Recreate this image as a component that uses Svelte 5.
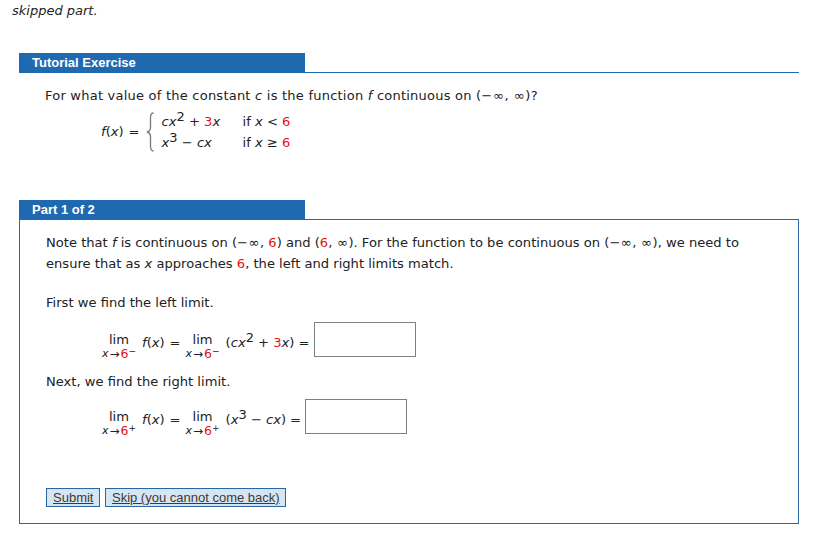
<script>
  const steps = [
    { side: '−', label: 'First we find the left limit.', name: 'left limit' },
    { side: '+', label: 'Next, we find the right limit.', name: 'right limit' }
  ];
</script>

{#snippet lim(side)}
  <span class="lim">
    <span>lim</span>
    <span class="under"><i>x</i><span class="arrow">→</span><span class="red num">6</span><span class="side">{side}</span></span>
  </span>
{/snippet}

<div class="page">
  <p class="skipped">skipped part.</p>

  <section class="exercise">
    <div class="head"><h2>Tutorial Exercise</h2></div>
    <div class="intro">
      <p class="question">For what value of the constant <i>c</i> is the function <i>f</i> continuous on (−<span class="inf">∞</span>, <span class="inf">∞</span>)?</p>
      <div class="piecewise">
        <span class="fx"><i>f</i>(<i>x</i>)<span class="eqs">=</span></span>
        <svg class="brace" width="10" height="40" viewBox="0 0 10 40">
          <path d="M8.5 1 C6 1 5.5 3 5.5 6 L5.5 15 C5.5 18 4.5 19.5 2 20 C4.5 20.5 5.5 22 5.5 25 L5.5 34 C5.5 37 6 39 8.5 39" fill="none" stroke="#777" stroke-width="1.3" />
        </svg>
        <div class="cases">
          <span><i>cx</i><sup>2</sup> + <span class="red">3</span><i>x</i></span>
          <span>if <i>x</i> &lt; <span class="red">6</span></span>
          <span><i>x</i><sup>3</sup> − <i>cx</i></span>
          <span>if <i>x</i> ≥ <span class="red">6</span></span>
        </div>
      </div>
    </div>
  </section>

  <section class="part">
    <div class="head"><h2>Part 1 of 2</h2></div>
    <div class="box">
      <p class="note">Note that <i>f</i> is continuous on (−<span class="inf">∞</span>, <span class="red">6</span>) and (<span class="red">6</span>, <span class="inf">∞</span>). For the function to be continuous on (−<span class="inf">∞</span>, <span class="inf">∞</span>), we need to ensure that as <i>x</i> approaches <span class="red">6</span>, the left and right limits match.</p>

      <p class="step first">{steps[0].label}</p>
      <div class="eq">
        {@render lim(steps[0].side)}
        <span class="t1"><i>f</i>(<i>x</i>)<span class="eqs">=</span></span>
        {@render lim(steps[0].side)}
        <span class="t2">(<i>cx</i><sup>2</sup> + <span class="red">3</span><i>x</i>)<span class="eqs">=</span></span>
        <input type="text" aria-label={steps[0].name} />
      </div>

      <p class="step next">{steps[1].label}</p>
      <div class="eq second">
        {@render lim(steps[1].side)}
        <span class="t1"><i>f</i>(<i>x</i>)<span class="eqs">=</span></span>
        {@render lim(steps[1].side)}
        <span class="t2 tight">(<i>x</i><sup>3</sup> − <i>cx</i>)<span class="eqs">=</span></span>
        <input type="text" aria-label={steps[1].name} />
      </div>

      <div class="actions">
        <button>Submit</button>
        <button class="skip">Skip (you cannot come back)</button>
      </div>
    </div>
  </section>
</div>

<style>
  :global(body) {
    margin: 0;
    background: #fff;
  }

  .page {
    width: 830px;
    height: 542px;
    overflow: hidden;
    font-family: "DejaVu Sans", Verdana, sans-serif;
    font-size: 13.1px;
    color: #222;
  }

  p {
    margin: 0;
  }

  .red {
    color: #e81010;
  }

  .inf {
    padding: 0 0.5px;
  }

  .skipped {
    padding: 2px 0 0 12px;
    font-size: 13px;
    line-height: 18px;
    font-style: italic;
  }

  .exercise {
    margin: 33px 31px 0 19px;
    height: 147px;
  }

  .part {
    margin: 0 31px 0 19px;
  }

  .head {
    height: 19px;
    border-bottom: 1px solid #1f69b0;
  }

  h2 {
    box-sizing: border-box;
    width: 286px;
    height: 20px;
    margin: 0;
    padding-left: 13px;
    background: #1f69b0;
    color: #fff;
    font-family: "Liberation Sans", Arial, sans-serif;
    font-size: 13px;
    font-weight: 700;
    line-height: 19px;
  }

  .intro {
    padding: 14px 0 0 26px;
    line-height: 18px;
  }

  .question {
    font-size: 13px;
    letter-spacing: 0.23px;
  }

  .piecewise {
    display: flex;
    align-items: center;
    margin: 7px 0 0 56px;
  }

  .fx {
    margin-right: 5px;
    white-space: nowrap;
  }

  .eqs {
    margin-left: 5px;
  }

  .brace {
    margin-right: 7px;
  }

  .cases {
    display: grid;
    grid-template-columns: 81px auto;
    row-gap: 3px;
    line-height: 18px;
    white-space: nowrap;
  }

  sup {
    font-size: 13px;
    line-height: 0;
    vertical-align: 5px;
  }

  .box {
    box-sizing: border-box;
    height: 304px;
    padding: 12px 0 0 26px;
    border: 1px solid #2a66a5;
    border-top: 0;
  }

  .note {
    width: 720px;
    line-height: 21px;
  }

  .step {
    line-height: 18px;
  }

  .first {
    margin-top: 20px;
  }

  .next {
    margin-top: 16px;
  }

  .eq {
    display: flex;
    align-items: center;
    height: 36px;
    margin: 9px 0 0 55px;
  }

  .eq.second {
    margin-top: 7px;
  }

  .lim {
    display: inline-flex;
    flex-direction: column;
    align-items: center;
    width: 36px;
    margin-top: 14px;
    line-height: 16px;
  }

  .under {
    display: flex;
    align-items: center;
    font-size: 11px;
    line-height: 12px;
    white-space: nowrap;
  }

  .arrow {
    margin: 0 1px;
    font-size: 12px;
  }

  .num {
    font-size: 12.5px;
  }

  .side {
    font-size: 9px;
    line-height: 8px;
    margin-top: -7px;
  }

  .t1 {
    margin: 7px 4px 0 5px;
    white-space: nowrap;
  }

  .t2 {
    margin: 7px 5px 0 5px;
    white-space: nowrap;
  }

  .t2.tight {
    margin-right: 4px;
  }

  .t2 .eqs {
    margin-left: 4px;
  }

  input {
    box-sizing: border-box;
    width: 102px;
    height: 35px;
    margin: 0;
    padding: 0;
    border: 1px solid #7f7f7f;
    border-radius: 0;
    background: #fff;
  }

  .actions {
    display: flex;
    gap: 5px;
    margin-top: 54px;
  }

  button {
    height: 19px;
    margin: 0;
    padding: 0 6px;
    border: 1px solid #2a66a5;
    border-radius: 0;
    background: #d7e5f2;
    color: #3a3a3a;
    font-family: "Liberation Sans", Arial, sans-serif;
    font-size: 13px;
    line-height: 17px;
    text-decoration: underline;
  }

  .skip {
    padding: 0 5.5px;
  }
</style>
